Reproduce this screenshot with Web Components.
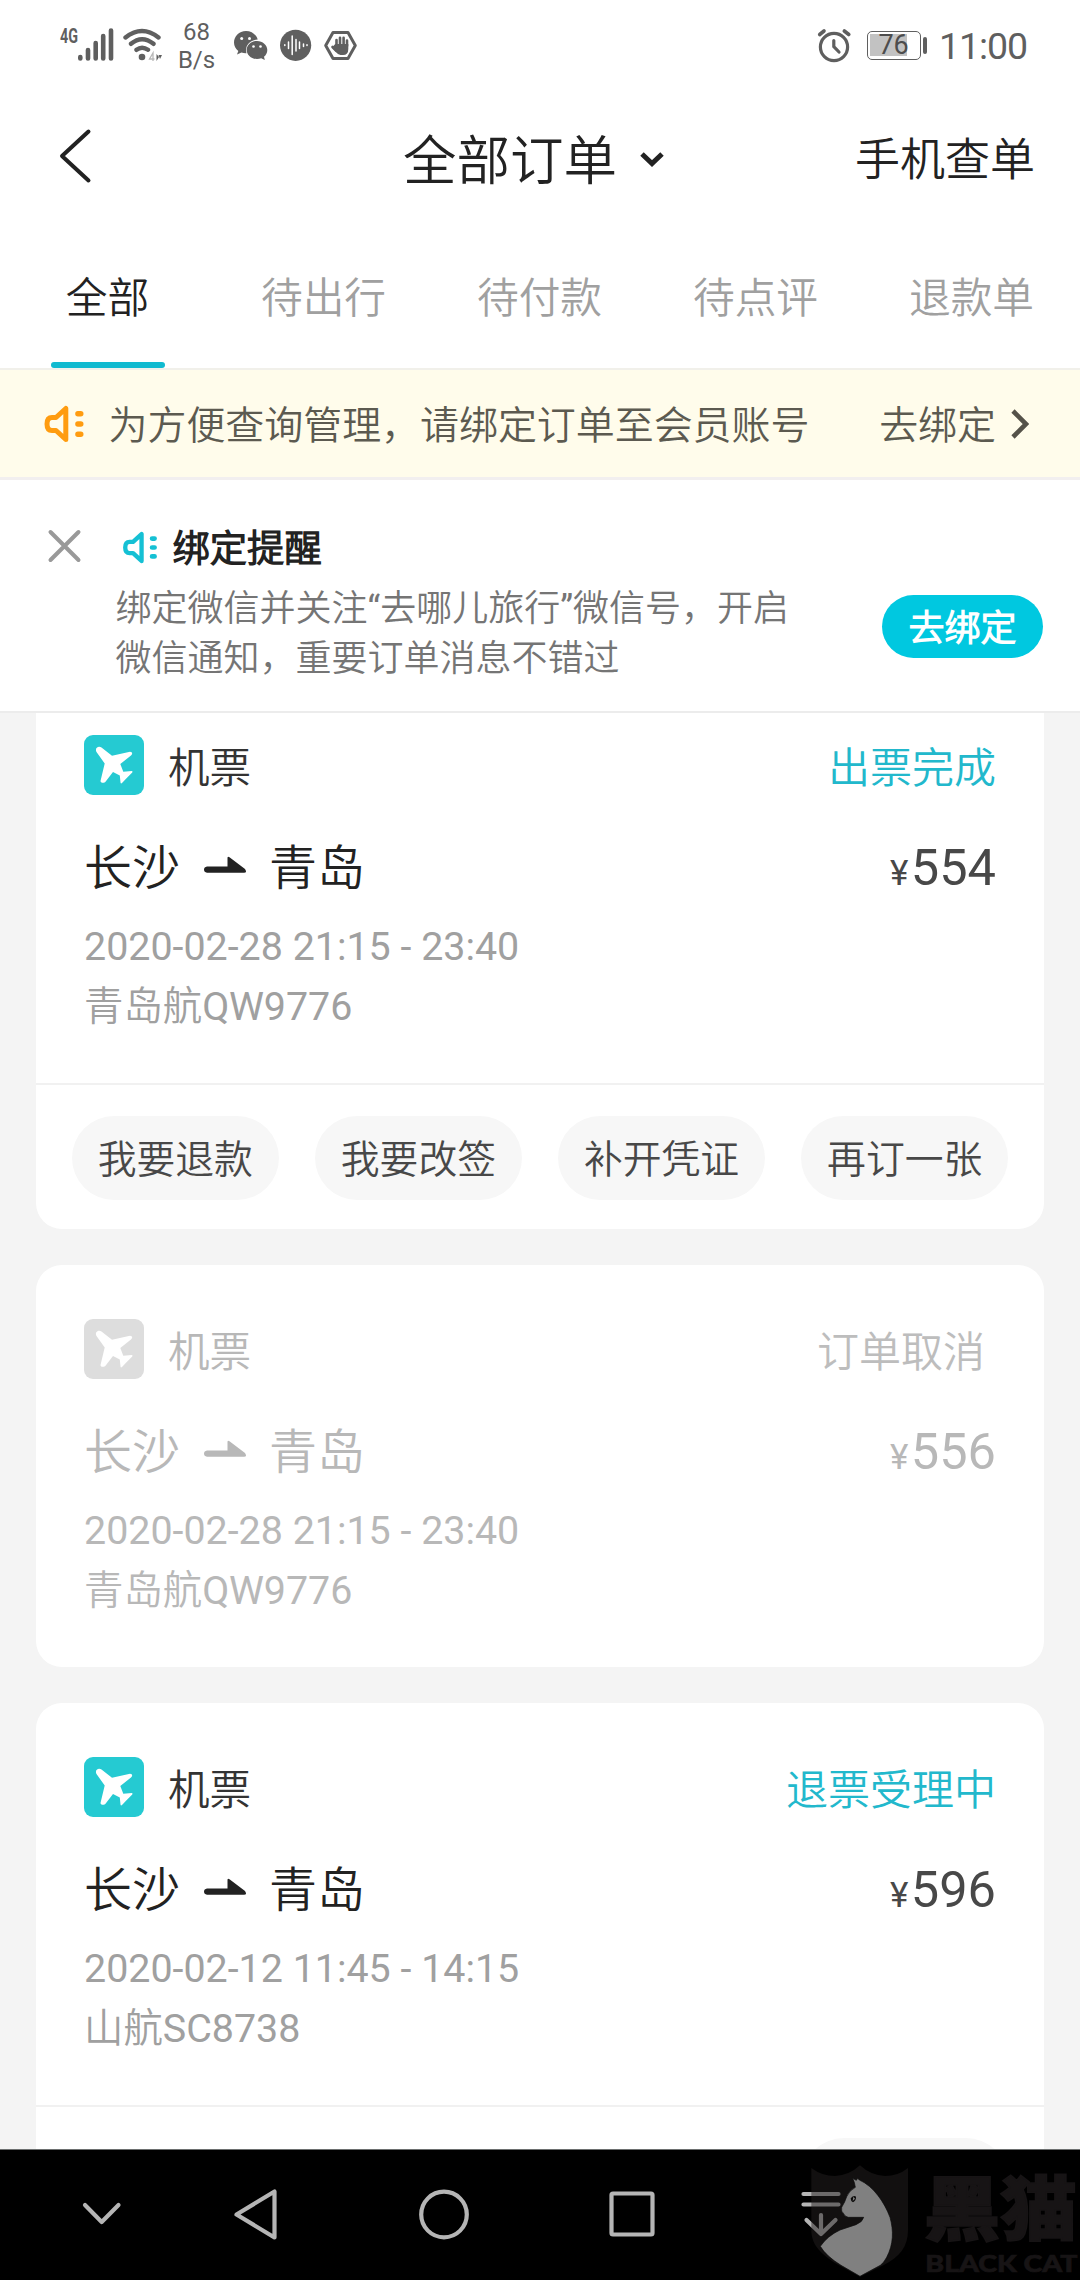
<!DOCTYPE html>
<html lang="zh-CN">
<head>
<meta charset="utf-8">
<title>全部订单</title>
<style>
html, body { margin: 0; padding: 0; }
body { width: 1080px; height: 2280px; overflow: hidden; background: #fff; font-family: Roboto, "Noto Sans CJK SC DemiLight", "Noto Sans CJK SC", sans-serif; }
</style>
</head>
<body>
<orders-app></orders-app>
<script>
const define = (name, html) => {
  const tpl = document.createElement('template');
  tpl.innerHTML = '<style>*{box-sizing:border-box}svg{display:block;flex:none}</style>' + html;
  customElements.define(name, class extends HTMLElement {
    constructor() {
      super();
      this.attachShadow({ mode: 'open' }).appendChild(tpl.content.cloneNode(true));
    }
  });
};

define('speaker-icon', `
<style>:host{display:block;flex:none;width:40px;height:38px}svg{width:100%;height:100%}</style>
<svg viewBox="44.5 404 40 38" fill="none" stroke="currentColor" stroke-linecap="round" stroke-linejoin="round">
<path stroke-width="5" d="M66.3 407.5V438.5L56.5 429.5H52.5Q47.5 429.5 47.5 423Q47.5 416.5 52.5 416.5H56.5Z"/>
<path stroke-width="5.4" d="M78.4 412.7H81.3M78.4 423H81.3M78.4 433.3H81.3"/></svg>`);

define('status-bar', `
<style>
:host{display:flex;height:92px;align-items:flex-start;color:#5f5f5f}
.rate{width:52px;margin:18px 9px 0 4.500px;font-size:24px;line-height:28px;text-align:center}
.gap{flex:1}
.bat{margin:31px 2px 0 15px}
.nub{width:4.5px;height:17px;border-radius:2px;background:#5f5f5f;margin-top:37px}
.batt{width:54px;height:29px;border:1.5px solid #5f5f5f;border-radius:5px;font-size:27px;line-height:27px;text-align:center;color:#4d4d4d;background:linear-gradient(#c2c2c2,#c2c2c2) 2px 2px/37px 22px no-repeat}
.time{margin:24px 53px 0 12px;font-size:37.500px;line-height:44px;letter-spacing:-1.100px}
</style>
<svg style="margin:22px 0 0 56px" width="110" height="44" viewBox="56 22 110 44">
<text x="60" y="43" font-size="21" font-weight="700" textLength="18" lengthAdjust="spacingAndGlyphs" fill="#5f5f5f">4G</text>
<path stroke="#5f5f5f" stroke-width="4.6" stroke-linecap="round" d="M80.3 57V58.5M88 50V58.5M95.7 43V58.5M103.2 36V58.5M111 30.5V58.5"/>
<path fill="none" stroke="#5f5f5f" stroke-width="4.4" stroke-linecap="round" d="M125.5 37.5Q142 24.5 158.5 37.5M131 43.8Q142 34.5 153.5 43.8M136.5 49.8Q142 45.5 148 49.8"/>
<circle cx="142" cy="57" r="3.3" fill="#5f5f5f"/>
<path fill="none" stroke="#b8b8b8" stroke-width="1.3" d="M153 61V53L149.5 59H154.5"/>
<path fill="#5f5f5f" d="M156.5 54L159 57L156.5 61ZM158.5 55H162L160 59Z"/>
</svg>
<div class="rate">68<br>B/s</div>
<svg style="margin-top:26px" width="128" height="40" viewBox="230 26 128 40">
<path fill="#5f5f5f" d="M244 31C237 31 232 36.500 232 42.500C232 46 233.700 49 236.300 51L235 54.500L239.500 52.600C241 53.200 243 53.400 244.500 53.300C242.500 45.500 248 40 255.700 39.600C254.300 34.500 249.500 31 244 31Z"/>
<path fill="#5f5f5f" d="M255 41C249 41 244.700 45.200 244.700 50C244.700 55 249.300 59 255 59C256.500 59 258 58.800 259.200 58.300L262.800 60L262 56.800C264 55.200 265.300 52.800 265.300 50C265.300 45.200 260.700 41 255 41Z"/>
<g fill="#fff"><circle cx="239.700" cy="38.500" r="1.500"/><circle cx="247.500" cy="38.500" r="1.500"/><circle cx="251.500" cy="46.500" r="1.300"/><circle cx="258.500" cy="46.500" r="1.300"/></g>
<circle cx="293.600" cy="45.300" r="15.600" fill="#5f5f5f"/>
<path stroke="#fff" stroke-width="1.500" stroke-linecap="round" d="M282.800 44.800V45.600M286.500 42V48.500M290.200 36V54.500M294 39.500V51M297.500 42V48.500M301.500 44V46.500M305 44.800V45.600"/>
<path fill="none" stroke="#5f5f5f" stroke-width="3" stroke-linejoin="round" d="M323.700 45.500L331 32.500H346L353.300 45.500L346 58.500H331Z"/>
<path fill="#5f5f5f" stroke="#5f5f5f" stroke-width="2.600" stroke-linecap="round" d="M334.500 46V40M338 44V37.800M341.600 44V37.800M345 46V40.500M330.500 47L334.500 51"/>
<path fill="#5f5f5f" d="M333.200 44H346.300V49Q346.300 55 341 55H338.500Q336 55 334 52L330 47.500Z"/>
</svg>
<div class="gap"></div>
<svg style="margin-top:26px" width="36" height="40" viewBox="815.500 26 36 40" fill="none" stroke="#5f5f5f" stroke-linecap="round">
<circle cx="833.500" cy="47" r="13.600" stroke-width="3.200"/><path stroke-width="3.200" d="M833.300 40.500V46.500L838.500 52"/><path stroke-width="3.600" d="M819.200 34.500L823.500 31M843.800 31L848.300 34.500"/></svg>
<div class="bat"><div class="batt">76</div></div><div class="nub"></div><div class="time">11:00</div>`);

define('page-header', `
<style>
:host{display:flex;height:136px;align-items:center;color:#222;justify-content:space-between;padding:0 45px 0 58px}
.side{flex:1;display:flex}
.back{margin-bottom:8px}
.t{display:flex;align-items:center;font-size:53.500px;line-height:70px;gap:22px;margin-right:25px}
.t span{padding-top:3px}
.t svg{margin-bottom:2px}
.r{justify-content:flex-end;font-size:45px;line-height:60px;padding-top:2px}
</style>
<div class="side"><svg class="back" width="36" height="60" viewBox="58 126 36 60" fill="none" stroke="#222" stroke-width="4" stroke-linecap="round"><path stroke-linejoin="round" d="M88.500 131.500L62 156L88.500 180.500"/></svg></div>
<div class="t"><span><slot></slot></span><svg width="26" height="18" viewBox="638 149 26 18" fill="none" stroke="#222" stroke-width="5"><path d="M641 153L651 162.500L661 153"/></svg></div>
<div class="side r"><slot name="action"></slot></div>`);

define('tab-item', `
<style>
:host{display:flex;width:216px;height:140px;justify-content:center;color:#a0a0a0;font-size:41.700px;line-height:56px;padding:43px 1px 0 0;position:relative}
:host([active]){color:#222}
i{display:none;position:absolute;left:51px;bottom:0;width:114px;height:6.500px;border-radius:4px;background:#10bad0}
:host([active]) i{display:block}
</style><slot></slot><i></i>`);

define('tab-bar', `
<style>:host{display:flex;height:140px}</style><slot></slot>`);

define('bind-banner', `
<style>
:host{display:flex;height:112px;align-items:center;background:#fffceb;color:#5c5a50;border-top:2px solid #f1f0ea;border-bottom:3px solid #f2efef;padding:0 51px 0 43.500px;font-size:38.950px;line-height:54px}
speaker-icon{color:#ff9c10;margin-right:25px}
.m{flex:1;padding-top:4px}.g{padding-top:4px;margin-right:15px}
</style>
<speaker-icon></speaker-icon><div class="m"><slot></slot></div><div class="g"><slot name="go"></slot></div>
<svg width="18" height="32" viewBox="1011 408 18 32" fill="none" stroke="#555249" stroke-width="4.600"><path d="M1013 411L1026 424L1013 437"/></svg>`);

define('bind-notice', `
<style>
:host{display:flex;height:233px;border-bottom:2.500px solid #ececec;padding:0 37px 0 45.500px;color:#757575}
.x{margin-top:48px}
.b{flex:1;margin-left:34px;padding-top:41px}
.h{display:flex;align-items:center;color:#222;font-weight:700;font-size:37.300px;line-height:56px;height:56px;padding-left:6px}
speaker-icon{width:36px;height:33px;color:#15c0d4;margin-right:15px;margin-top:-3px}
.d{font-size:36px;line-height:50px;padding-top:7px;white-space:nowrap}
.btn{width:161px;height:63px;margin-top:115px;border-radius:32px;background:#00c8e0;color:#fff;font-weight:700;font-size:36px;line-height:69px;text-align:center}
</style>
<svg class="x" width="36" height="36" viewBox="45.500 528 36 36" stroke="#999" stroke-width="4" stroke-linecap="round"><path d="M50 532L78 560M78 532L50 560"/></svg>
<div class="b"><div class="h"><speaker-icon></speaker-icon><slot name="title"></slot></div><div class="d"><slot></slot></div></div>
<div class="btn"><slot name="button"></slot></div>`);

define('pill-button', `
<style>:host{display:block;width:206.500px;height:84px;border-radius:42px;background:#f7f7f7;color:#484848;font-size:38.800px;line-height:87px;text-align:center}</style><slot></slot>`);

define('order-card', `
<style>
:host{display:block;flex:none;background:#fff;border-radius:26px;color:#333;--ic:#25cad2;--st:#22b8cc;--dark:#222;--sub:#a0a0a0;--price:#484848}
:host([cancelled]){color:#b8b8b8;--ic:#ddd;--st:#bdbdbd;--dark:#b8b8b8;--sub:#b8b8b8;--price:#b8b8b8}
.body{height:402px;padding:54px 48px 0}
.row{display:flex;align-items:center}
.top{height:60px;font-size:41.600px;line-height:60px}
.ico{width:60px;height:60px;border-radius:9px;background:var(--ic);margin-right:24px}
.top .k,.top .st{padding-top:7px}
.st{margin-left:auto;color:var(--st);font-size:42px}
:host([cancelled]) .st{margin-right:11px}
.route{height:66px;margin-top:41px;color:var(--dark);font-size:48px;line-height:66px}
.route svg{margin:-8px 22px 0 23px}
.price{margin-left:auto;color:var(--price);font-size:50.500px;padding-top:3px}
.price small{font-size:35px;margin-right:2.500px}
.sub{color:var(--sub);font-size:39.400px;line-height:60px;margin-top:15px}
.f{margin-top:0}
.acts{display:none;border-top:2.500px solid #f1f1f1;height:146px;padding:31px 36px 0;justify-content:space-between}
:host([actions]) .acts{display:flex}
:host([partial]) .acts{justify-content:flex-end}
</style>
<div class="body">
<div class="row top"><div class="ico"><svg width="60" height="60" viewBox="0 0 60 60"><path fill="#fff" d="M12.500 17C10.500 13.500 14 10.500 17.500 12.500L28 20.800L46 16.800C48.500 17 48.800 19 47 20.500L36.300 29L39.300 36.700L47.800 36C48.800 36.200 48.600 37 48 37.800L43 42.800L38 48C37.200 48.800 36.600 48.300 36.500 47.500L35.800 40.500L29 37L21.500 46.800C20.500 48.200 16.400 48.400 16.500 46L20.700 28.500Z"/></svg></div><div class="k"><slot name="kind"></slot></div><div class="st"><slot name="status"></slot></div></div>
<div class="row route"><slot name="from"></slot><svg width="44" height="20" viewBox="203 853 44 20"><path fill="var(--dark)" d="M207 864.500H227.500V856Q227.500 854 229.500 855.300L245 867Q247.500 870.700 244 870.700H207Q204 870.500 204 867.600Q204 865 207 864.500Z"/></svg><slot name="to"></slot><div class="price"><small>¥</small><slot name="price"></slot></div></div>
<div class="sub"><slot name="time"></slot></div><div class="sub f"><slot name="flight"></slot></div>
</div><div class="acts"><slot></slot></div>`);

define('system-nav', `
<style>:host{display:block;flex:none;height:131px;background:#000;border-top:1.500px solid #6d7070;position:relative}
.keys{display:flex;align-items:center;height:129px}
.mark{position:absolute;right:0;bottom:0;overflow:visible}</style>
<div class="keys"><svg width="1080" height="129" viewBox="0 2151 1080 129" fill="none" stroke="#b5b5b5" stroke-width="4.200" stroke-linecap="round" stroke-linejoin="round">
<path d="M85 2206L101.700 2223L118.500 2206"/><path d="M274.500 2192.500V2238.500L236.500 2215.500Z"/><circle cx="444" cy="2215.500" r="22.800"/><rect x="611.500" y="2194.500" width="41" height="41" rx="1.500"/>
<path d="M803.500 2195H838.500M803.500 2205.500H838.500M821 2216V2234.500M806.500 2221L821 2235L835.500 2221"/></svg></div>
<svg class="mark" width="280" height="120" viewBox="180 240 840 360">
<path fill="#231f20" fill-opacity=".5" d="M214 264Q246 288 285 288Q328 286 360 256Q392 286 435 288Q474 288 504 264V450C504 500 480 530 430 556L360 590L290 552C236 518 214 490 214 450Z"/>
<path fill="#808080" stroke="#0b0a0a" stroke-width="2" d="M338 295L349 301L353 295L358 300C400 318 434 368 450 412C461 452 461 492 440 532Q432 548 421 556L360 589L303 556Q258 528 241 499Q262 468 300 450L348 434Q368 426 371 412L325 412Q313 409 311 401Q302 395 305 382Q315 366 320 350Q327 332 346 322Q344 306 338 295Z"/>
<path fill="#0b0a0a" d="M332 355Q341 345 348 350Q349 361 339 367Q332 364 332 355Z"/><path fill="#808080" d="M340 350L345 356L338 363Z"/>
<g fill="#171415" stroke="#171415"><text x="551" y="466" font-family="Noto Sans CJK SC" font-weight="900" font-size="212" stroke-width="5" textLength="460" lengthAdjust="spacingAndGlyphs">黑猫</text>
<text x="556" y="576" font-family="Lato" font-weight="900" font-size="66" stroke-width="2" textLength="456" lengthAdjust="spacingAndGlyphs">BLACK CAT</text></g></svg>`);

define('orders-app', `
<style>
:host{display:flex;flex-direction:column;width:1080px;height:2280px;overflow:hidden}
status-bar,page-header,tab-bar,bind-banner,bind-notice{flex:none}
.list{flex:1;min-height:0;overflow:hidden;background:#f4f4f4;padding:0 36px;display:flex;flex-direction:column;gap:36px}
.list order-card:first-child{margin-top:-32px}
</style>
<status-bar></status-bar>
<page-header>全部订单<span slot="action">手机查单</span></page-header>
<tab-bar><tab-item active>全部</tab-item><tab-item>待出行</tab-item><tab-item>待付款</tab-item><tab-item>待点评</tab-item><tab-item>退款单</tab-item></tab-bar>
<bind-banner>为方便查询管理，请绑定订单至会员账号<span slot="go">去绑定</span></bind-banner>
<bind-notice><span slot="title">绑定提醒</span>绑定微信并关注“去哪儿旅行”微信号，开启<br>微信通知，重要订单消息不错过<span slot="button">去绑定</span></bind-notice>
<div class="list">
<order-card actions><span slot="kind">机票</span><span slot="status">出票完成</span><span slot="from">长沙</span><span slot="to">青岛</span><span slot="price">554</span><span slot="time">2020-02-28 21:15 - 23:40</span><span slot="flight">青岛航QW9776</span><pill-button>我要退款</pill-button><pill-button>我要改签</pill-button><pill-button>补开凭证</pill-button><pill-button>再订一张</pill-button></order-card>
<order-card cancelled><span slot="kind">机票</span><span slot="status">订单取消</span><span slot="from">长沙</span><span slot="to">青岛</span><span slot="price">556</span><span slot="time">2020-02-28 21:15 - 23:40</span><span slot="flight">青岛航QW9776</span></order-card>
<order-card actions partial><span slot="kind">机票</span><span slot="status">退票受理中</span><span slot="from">长沙</span><span slot="to">青岛</span><span slot="price">596</span><span slot="time">2020-02-12 11:45 - 14:15</span><span slot="flight">山航SC8738</span><pill-button></pill-button></order-card>
</div>
<system-nav></system-nav>`);
</script>
</body>
</html>
